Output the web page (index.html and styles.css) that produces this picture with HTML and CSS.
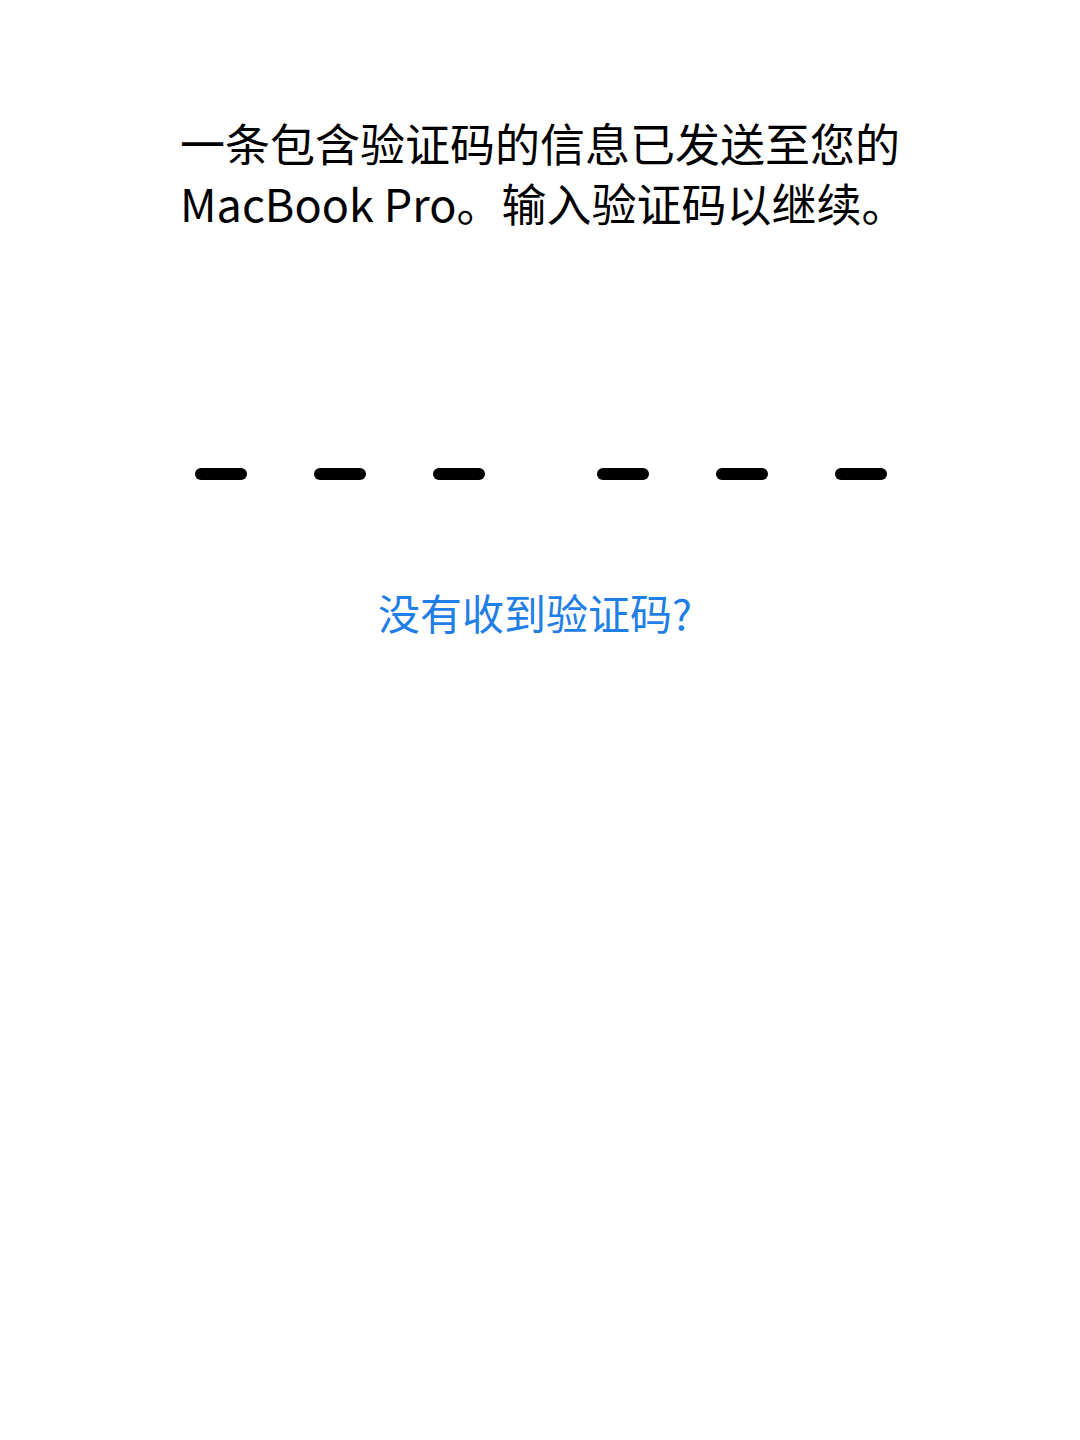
FILE: index.html
```html
<!DOCTYPE html>
<html lang="zh-CN">
<head>
<meta charset="utf-8">
<link rel="stylesheet" href="styles.css">
</head>
<body>
<div class="page">
  <p class="message">一条包含验证码的信息已发送至您的<br>MacBook Pro。输入验证码以继续。</p>
  <div class="code">
    <div class="group"><span class="dash"></span><span class="dash"></span><span class="dash"></span></div>
    <div class="group"><span class="dash"></span><span class="dash"></span><span class="dash"></span></div>
  </div>
  <a class="resend">没有收到验证码?</a>
</div>
</body>
</html>
```
FILE: styles.css
```css
html, body {
  margin: 0;
  padding: 0;
  background: #ffffff;
}
.page {
  width: 1080px;
  height: 1440px;
  display: flex;
  flex-direction: column;
  align-items: center;
  font-family: "Noto Sans CJK SC", "Noto Sans", sans-serif;
}
.message {
  width: 720px;
  margin: 113px 0 0 0;
  font-size: 45px;
  line-height: 60px;
  color: #000;
  text-align: left;
  white-space: nowrap;
}
.code {
  display: flex;
  gap: 112px;
  margin-top: 235px;
  margin-left: 2px;
}
.group {
  display: flex;
  gap: 67px;
}
.dash {
  display: block;
  width: 52px;
  height: 12px;
  border-radius: 6px;
  background: #000;
}
.resend {
  margin-top: 107px;
  margin-right: 10px;
  font-size: 42px;
  line-height: 50px;
  color: #1f7fe6;
  text-decoration: none;
}
```
